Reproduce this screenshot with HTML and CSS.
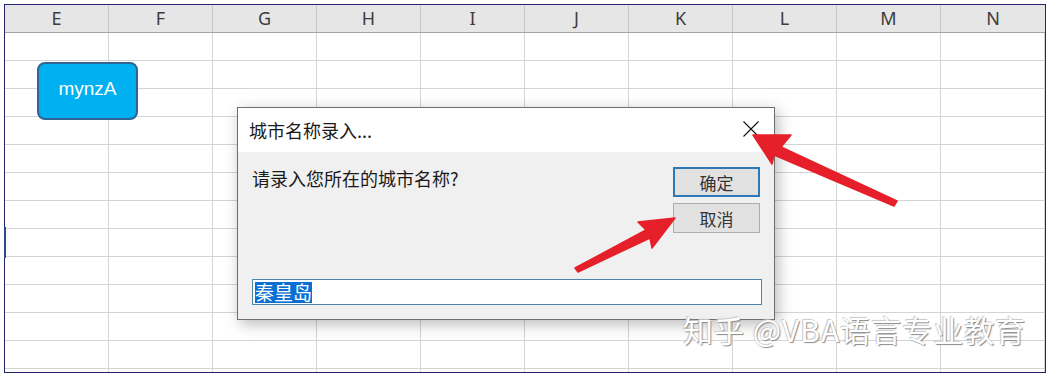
FILE: index.html
```html
<!DOCTYPE html>
<html>
<head>
  <meta charset="utf-8">
  <title>城市名称录入</title>
  <link rel="stylesheet" href="styles.css">
</head>
<body>
<div class="page">

  <!-- worksheet -->
  <div class="sheet">
    <div class="col-head">
      <div>E</div><div>F</div><div>G</div><div>H</div><div>I</div>
      <div>J</div><div>K</div><div>L</div><div>M</div><div>N</div>
    </div>
    <div class="cells"></div>
  </div>
  <div class="row-mark"></div>

  <!-- shape button on the sheet -->
  <div class="shape-btn">mynzA</div>

  <!-- InputBox dialog -->
  <div class="dialog">
    <div class="dialog-title">
      <span>城市名称录入...</span>
      <svg class="close" width="16" height="16" viewBox="0 0 16 16">
        <path d="M0.5 0.5 L15.5 15.5 M15.5 0.5 L0.5 15.5" stroke="#111" stroke-width="1.1" fill="none"/>
      </svg>
    </div>
    <div class="dialog-body">
      <div class="dialog-top">
        <p class="prompt">请录入您所在的城市名称?</p>
        <div class="dialog-buttons">
          <button class="btn btn-default">确定</button>
          <button class="btn">取消</button>
        </div>
      </div>
      <div class="input-box"><span class="selected">秦皇岛</span></div>
    </div>
  </div>

  <!-- red annotation arrows -->
  <svg class="arrows" width="1060" height="377" viewBox="0 0 1060 377">
    <polygon points="753,135 791,135 781,147 897,201 894,206 774,155 772,164" />
    <polygon points="675,218 638,222 646,230 575,268 578,272 650,238 652,248" />
  </svg>

  <div class="watermark">知乎 @VBA语言专业教育</div>
</div>
</body>
</html>
```

FILE: styles.css
```css
body {
  margin: 0;
  background: #fff;
  font-family: "Noto Sans", "Noto Sans CJK SC", sans-serif;
}
.page {
  position: relative;
  width: 1060px;
  height: 377px;
  overflow: hidden;
}

/* worksheet grid */
.sheet {
  margin: 4px 0 0 4px;
  width: 1042px;
  height: 369px;
  box-sizing: border-box;
  border: 1px solid #23236b;
  overflow: hidden;
}
.col-head {
  display: grid;
  grid-template-columns: repeat(10, 104px);
  height: 28px;
  box-sizing: border-box;
  background: #e6e6e6;
  border-bottom: 1px solid #a3a3a3;
}
.col-head div {
  border-right: 1px solid #c8c8c8;
  text-align: center;
  font-size: 18px;
  line-height: 27px;
  color: #3c3c3c;
}
.col-head div:last-child {
  border-right: none;
}
.cells {
  height: 340px;
  background-image:
    linear-gradient(to right, transparent 103px, #d4d4d4 103px),
    linear-gradient(to bottom, transparent 27px, #d4d4d4 27px);
  background-size: 104px 100%, 100% 28px;
}
.row-mark {
  position: absolute;
  left: 4px;
  top: 227px;
  width: 2px;
  height: 31px;
  background: #2b4c8c;
}

/* shape */
.shape-btn {
  position: absolute;
  left: 37px;
  top: 62px;
  width: 101px;
  height: 58px;
  box-sizing: border-box;
  border: 2px solid #2f6494;
  border-radius: 8px;
  background: #00b0f0;
  color: #fff;
  font-family: "Liberation Sans", sans-serif;
  font-size: 19px;
  padding-bottom: 4px;
  display: flex;
  align-items: center;
  justify-content: center;
}

/* dialog */
.dialog {
  position: absolute;
  left: 237px;
  top: 107px;
  width: 538px;
  height: 213px;
  box-sizing: border-box;
  border: 1px solid #6e6e6e;
  background: #f0f0f0;
  box-shadow: 3px 4px 14px rgba(0, 0, 0, 0.28);
  display: flex;
  flex-direction: column;
  font-family: "Noto Sans CJK SC", sans-serif;
  color: #1a1a1a;
}
.dialog-title {
  height: 44px;
  flex: none;
  background: #fff;
  display: flex;
  align-items: center;
  justify-content: space-between;
  padding: 0 15px 0 11px;
  font-size: 18px;
}
.close {
  display: block;
  margin-top: -2px;
}
.dialog-body {
  flex: 1;
  display: flex;
  flex-direction: column;
  padding: 15px 12px 14px 14px;
}
.dialog-top {
  display: flex;
  justify-content: space-between;
  align-items: flex-start;
}
.prompt {
  margin: -1px 0 0 0;
  font-size: 18px;
  line-height: 24px;
}
.dialog-buttons {
  display: flex;
  flex-direction: column;
  gap: 6px;
  margin-right: 2px;
}
.btn {
  width: 87px;
  height: 30px;
  box-sizing: border-box;
  padding: 0;
  background: #e1e1e1;
  border: 1px solid #adadad;
  font-family: "Noto Sans CJK SC", sans-serif;
  font-size: 17px;
  color: #333;
}
.btn-default {
  border: 2px solid #2c78b8;
}
.input-box {
  margin-top: auto;
  height: 26px;
  box-sizing: border-box;
  border: 1px solid #4a84a6;
  background: #fff;
  padding: 1px 2px;
}
.selected {
  display: inline-block;
  background: #0a6fd2;
  color: #fff;
  font-size: 19px;
  line-height: 20px;
  height: 21px;
}

/* annotations */
.arrows {
  position: absolute;
  left: 0;
  top: 0;
  pointer-events: none;
}
.arrows polygon {
  fill: #e5202a;
  stroke: #e5202a;
  stroke-width: 1.5;
  stroke-linejoin: round;
}
.watermark {
  position: absolute;
  left: 683px;
  top: 309px;
  font-family: "Noto Sans CJK SC", sans-serif;
  font-size: 30px;
  line-height: 40px;
  letter-spacing: 1px;
  color: #fff;
  text-shadow: 1px 1px 1px #8a8a8a, -1px -1px 1px #c8c8c8;
  white-space: nowrap;
}
```
